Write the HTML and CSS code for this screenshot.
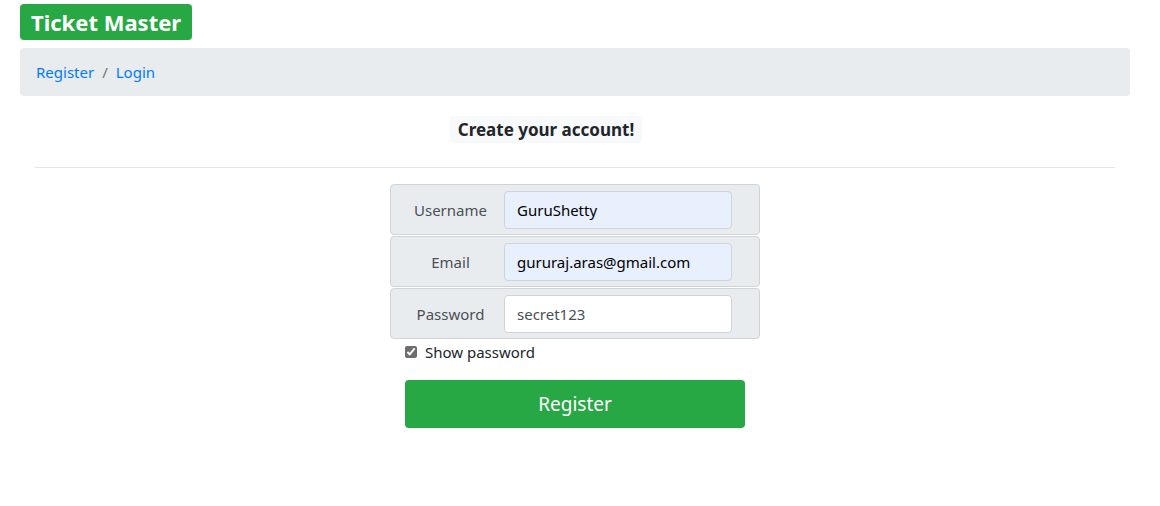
FILE: index.html
```html
<!DOCTYPE html>
<html lang="en">
<head>
<meta charset="utf-8">
<title>Ticket Master</title>
<link rel="stylesheet" href="styles.css">
</head>
<body>
<div class="page">
  <header class="brand-row">
    <span class="brand">Ticket Master</span>
  </header>
  <nav class="breadcrumb">
    <a href="#">Register</a>
    <span class="sep">/</span>
    <a href="#">Login</a>
  </nav>
  <div class="heading-row">
    <h2 class="heading">Create your account!</h2>
  </div>
  <hr class="divider">
  <form class="form">
    <div class="group">
      <div class="row">
        <label class="label">Username</label>
        <input class="input autofill" type="text" value="GuruShetty">
      </div>
      <div class="row">
        <label class="label">Email</label>
        <input class="input autofill" type="text" value="gururaj.aras@gmail.com">
      </div>
      <div class="row">
        <label class="label">Password</label>
        <input class="input" type="text" value="secret123">
      </div>
    </div>
    <div class="check-row">
      <input class="check" type="checkbox" checked>
      <span class="check-label">Show password</span>
    </div>
    <button class="btn" type="button">Register</button>
  </form>
</div>
</body>
</html>
```

FILE: styles.css
```css
* { box-sizing: border-box; }
html, body { margin: 0; padding: 0; background: #fff; }
body {
  font-family: "Noto Sans", "Open Sans", sans-serif;
  color: #212529;
  font-size: 16px;
}
.page {
  width: 1110px;
  margin-left: 20px;
  padding-top: 4px;
}
.brand-row { display: flex; }
.brand {
  display: inline-block;
  background: #28a745;
  color: #fff;
  font-weight: 700;
  font-size: 22px;
  line-height: 36px;
  height: 36px;
  padding: 0 11px;
  border-radius: 4px;
}
.breadcrumb {
  margin-top: 8px;
  height: 48px;
  background: #e9ecef;
  border-radius: 4px;
  display: flex;
  align-items: center;
  padding: 0 16px;
  font-size: 15px;
}
.breadcrumb a { color: #007bff; text-decoration: none; }
.breadcrumb .sep { color: #6c757d; padding: 0 8px; }
.heading-row {
  display: flex;
  justify-content: center;
  padding-right: 58px;
  margin-top: 20px;
}
.heading {
  margin: 0;
  font-size: 17px;
  font-weight: 700;
  line-height: 27px;
  background: #f8f9fa;
  padding: 0 8px;
  border-radius: 3px;
}
.divider {
  margin: 24px 15px 0;
  border: 0;
  border-top: 1px solid rgba(0,0,0,0.1);
}
.form {
  width: 370px;
  margin: 16px auto 0;
  display: flex;
  flex-direction: column;
  align-items: center;
}
.group { width: 370px; display: flex; flex-direction: column; gap: 1px; }
.row {
  display: flex;
  align-items: center;
  background: #e9ecef;
  border: 1px solid #ced4da;
  border-radius: 4px;
  padding: 6px 27px 5px 0;
}
.label {
  flex: 0 0 113px;
  padding-left: 6px;
  text-align: center;
  color: #495057;
  font-size: 15px;
}
.input {
  width: 228px;
  height: 38px;
  border: 1px solid #ced4da;
  border-radius: 4px;
  padding: 0 12px;
  font-family: inherit;
  font-size: 15px;
  color: #495057;
  background: #fff;
  outline: none;
}
.input.autofill { background: #e8f0fe; color: #000; }
.check-row {
  width: 340px;
  display: flex;
  align-items: center;
  height: 24px;
  margin-top: 1px;
}
.check {
  margin: 0 8px 0 0;
  width: 12px;
  height: 12px;
  accent-color: #6e6e6e;
}
.check-label { font-size: 15px; color: #212529; }
.btn {
  margin-top: 16px;
  width: 340px;
  height: 48px;
  background: #28a745;
  color: #fff;
  border: 0;
  border-radius: 4px;
  font-family: inherit;
  font-size: 19px;
}
```
